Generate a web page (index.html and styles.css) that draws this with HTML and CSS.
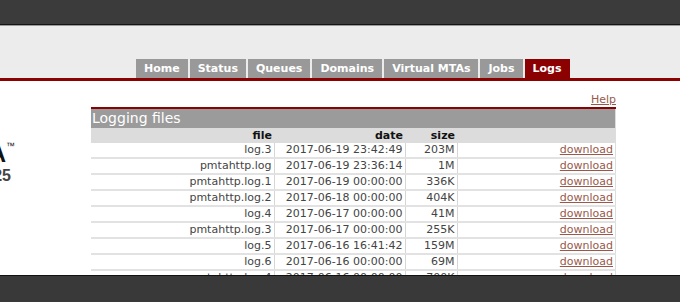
FILE: index.html
```html
<!DOCTYPE html>
<html lang="en">
<head>
    <meta charset="UTF-8">
    <meta name="viewport" content="width=device-width, initial-scale=1.0">
    <title>PowerMTA - Logs</title>
    <link rel="stylesheet" href="styles.css">
</head>
<body>
    <div class="topbar"></div>
    <div class="header">
        <ul class="tabs">
            <li><a href="#">Home</a></li>
            <li><a href="#">Status</a></li>
            <li><a href="#">Queues</a></li>
            <li><a href="#">Domains</a></li>
            <li><a href="#">Virtual MTAs</a></li>
            <li><a href="#">Jobs</a></li>
            <li class="active"><a href="#">Logs</a></li>
        </ul>
    </div>
    <div class="page">
        <div class="brand">
            <div class="brand-name">PowerMTA<sup>™</sup></div>
            <div class="brand-version">v4.5r25</div>
        </div>
        <div class="content">
            <div class="help"><a href="#">Help</a></div>
            <table class="files">
                <colgroup>
                    <col class="c-file">
                    <col class="c-date">
                    <col class="c-size">
                    <col class="c-link">
                </colgroup>
                <tr class="title"><td colspan="4">Logging files</td></tr>
                <tr class="head"><th>file</th><th>date</th><th>size</th><th></th></tr>
                <tr><td>log.3</td><td>2017-06-19 23:42:49</td><td>203M</td><td><a href="#">download</a></td></tr>
                <tr><td>pmtahttp.log</td><td>2017-06-19 23:36:14</td><td>1M</td><td><a href="#">download</a></td></tr>
                <tr><td>pmtahttp.log.1</td><td>2017-06-19 00:00:00</td><td>336K</td><td><a href="#">download</a></td></tr>
                <tr><td>pmtahttp.log.2</td><td>2017-06-18 00:00:00</td><td>404K</td><td><a href="#">download</a></td></tr>
                <tr><td>log.4</td><td>2017-06-17 00:00:00</td><td>41M</td><td><a href="#">download</a></td></tr>
                <tr><td>pmtahttp.log.3</td><td>2017-06-17 00:00:00</td><td>255K</td><td><a href="#">download</a></td></tr>
                <tr><td>log.5</td><td>2017-06-16 16:41:42</td><td>159M</td><td><a href="#">download</a></td></tr>
                <tr><td>log.6</td><td>2017-06-16 00:00:00</td><td>69M</td><td><a href="#">download</a></td></tr>
                <tr><td>pmtahttp.log.4</td><td>2017-06-16 00:00:00</td><td>700K</td><td><a href="#">download</a></td></tr>
                <tr><td>log.7</td><td>2017-06-15 00:00:00</td><td>88M</td><td><a href="#">download</a></td></tr>
            </table>
        </div>
    </div>
    <div class="bottombar"></div>
</body>
</html>
```

FILE: styles.css
```css
body {
    margin: 0;
    font-family: "DejaVu Sans", Verdana, sans-serif;
    background-color: #fff;
    overflow: hidden;
}

.topbar {
    height: 24px;
    background-color: #3b3b3b;
    border-bottom: 1px solid #141414;
}

.header {
    background-color: #ececec;
    border-top: 1px solid #9a9a9a;
    height: 52px;
    display: flex;
    align-items: flex-end;
    border-bottom: 3px solid #8b0000;
}

.tabs {
    list-style: none;
    margin: 0 0 0 136px;
    padding: 0;
    display: flex;
    gap: 2px;
}

.tabs li a {
    display: block;
    height: 19px;
    line-height: 20px;
    padding: 0 8px;
    background-color: #999;
    color: #fff;
    font-size: 11px;
    font-weight: bold;
    text-decoration: none;
}

.tabs li.active a {
    background-color: #8b0000;
}

.page {
    display: flex;
}

.brand {
    width: 24px;
    flex-shrink: 0;
    overflow: hidden;
    display: flex;
    flex-direction: column;
    align-items: flex-end;
    padding-top: 61px;
    font-family: "Liberation Sans", Arial, sans-serif;
    white-space: nowrap;
}

.brand-name {
    font-size: 24px;
    font-weight: bold;
    color: #111;
    line-height: 24px;
    margin-right: 9px;
}

.brand-name sup {
    font-size: 9px;
    font-weight: normal;
    vertical-align: top;
    line-height: 9px;
}

.brand-version {
    font-size: 16px;
    font-weight: bold;
    color: #444;
    margin-top: 1px;
    margin-right: 13px;
}

.content {
    margin-left: 67px;
    width: 525px;
}

.help {
    text-align: right;
    font-size: 11px;
    padding-top: 12px;
    height: 14px;
}

.help a,
.files a {
    color: #99594a;
}

.files {
    width: 525px;
    border-collapse: collapse;
    table-layout: fixed;
    border-top: 2px solid #8b0000;
    border-right: 1px solid #ddd;
    font-size: 11px;
    color: #444;
}

.c-file { width: 183px; }
.c-date { width: 131px; }
.c-size { width: 52px; }

.files td,
.files th {
    text-align: right;
    padding: 0 2px 0 3px;
    height: 14px;
    line-height: 14px;
    white-space: nowrap;
}

.files td {
    border-bottom: 2px solid #e2e2e2;
    border-left: 1px solid #d6d6d6;
}

.files td:first-child {
    border-left: none;
}

.files .title td {
    background-color: #9b9b9b;
    color: #fff;
    font-size: 14px;
    text-align: left;
    padding: 0 1px;
    height: 19px;
    line-height: 19px;
    border: none;
}

.files .head th {
    background-color: #dcdcdc;
    color: #111;
    font-weight: bold;
    height: 15px;
    line-height: 15px;
}

.bottombar {
    position: fixed;
    left: 0;
    right: 0;
    bottom: 0;
    height: 26px;
    background-color: #393939;
    border-top: 1px solid #111;
}
```
